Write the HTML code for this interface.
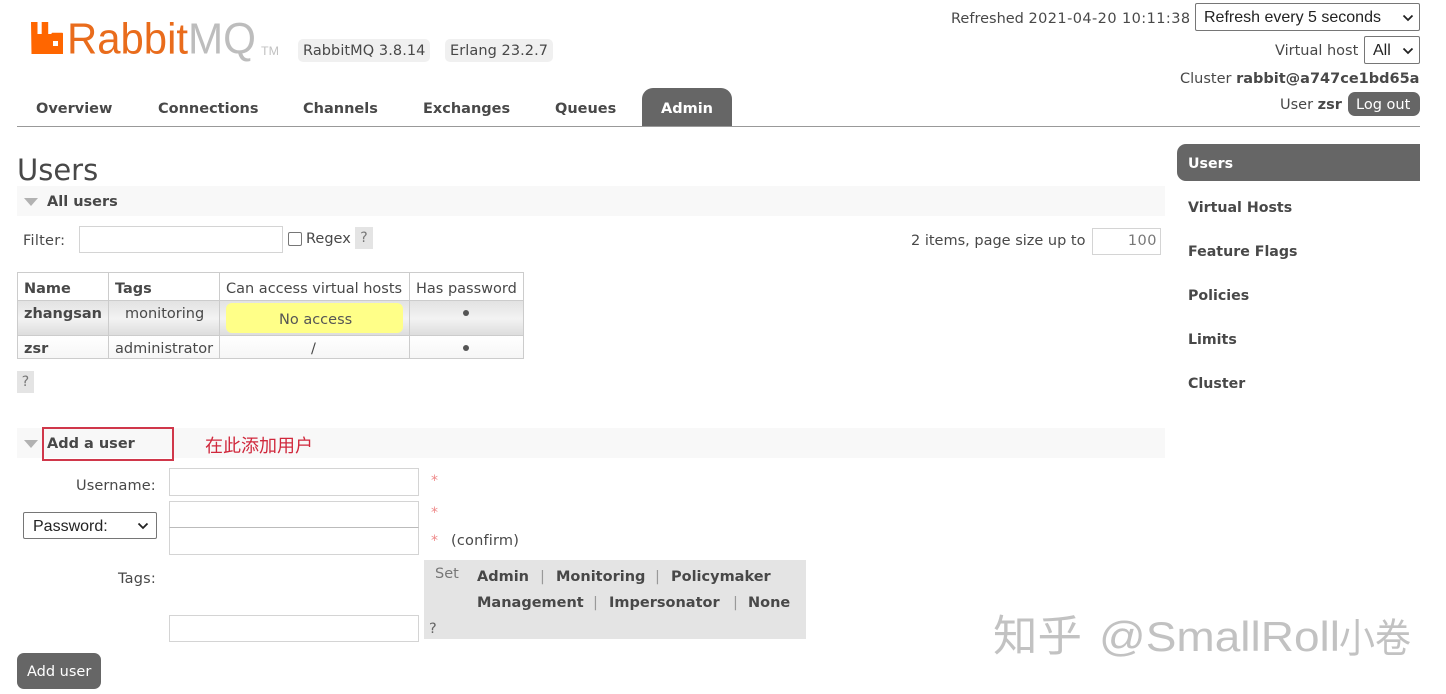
<!DOCTYPE html>
<html><head><meta charset="utf-8"><title>RabbitMQ Management</title>
<style>
html,body{margin:0;padding:0;background:#fff}
body{position:relative;width:1446px;height:694px;overflow:hidden;font-family:"DejaVu Sans",Verdana,sans-serif;font-size:14.5px;color:#484848}
.t{position:absolute;white-space:nowrap;line-height:18px}
.b{font-weight:bold}
.box{position:absolute;box-sizing:border-box}
.inp{position:absolute;box-sizing:border-box;background:#fff;border:1px solid #d4d4d4}
.sel{position:absolute;box-sizing:border-box;background:#fff;border:1px solid #767676;border-radius:2px;font-family:"Liberation Sans",sans-serif;font-size:16px;color:#222;line-height:28px;padding-left:8px}
.sel svg{position:absolute;top:10px}
.tri{position:absolute;width:0;height:0;border-left:7px solid transparent;border-right:7px solid transparent;border-top:8px solid #b2b2b2}
.q{position:absolute;background:#e4e4e4;color:#777;text-align:center;line-height:22px;font-size:14px}
.red{color:#e88;position:absolute;font-size:14px;line-height:14px}
.nav{position:absolute;font-weight:bold;white-space:nowrap;line-height:18px;color:#484848}
.side{position:absolute;left:1188px;font-weight:bold;font-size:14.2px;line-height:18px;white-space:nowrap;color:#484848}
.dot{position:absolute;width:6px;height:6px;border-radius:50%;background:#555}
</style></head><body>

<svg class="box" style="left:0;top:0" width="300" height="70" viewBox="0 0 300 70">
<path fill="#f60" fill-rule="evenodd" d="M31 22h6.500v12h4.200v-12h6.500v12h3.300v-.5q0-.8.8-.8h9.900q.8 0 .8.8v20.500h-31.500zM53 41h5v5h-5z"/>
<text x="67" y="53.500" font-family="Liberation Sans" font-size="44" fill="#e96c1c" textLength="121" lengthAdjust="spacingAndGlyphs">Rabbit</text>
<text x="188" y="53.500" font-family="Liberation Sans" font-size="44" fill="#bdbdbd" textLength="68" lengthAdjust="spacingAndGlyphs">MQ</text>
<text x="261" y="55" font-family="Liberation Sans" font-size="12" fill="#c2c2c2" textLength="18" lengthAdjust="spacingAndGlyphs">TM</text>
</svg>

<div class="box" style="left:298px;top:39px;width:132px;height:23px;background:#f0f0f0;border-radius:5px"></div>
<div class="t" style="left:303px;top:42px;letter-spacing:.07px">RabbitMQ 3.8.14</div>
<div class="box" style="left:445px;top:39px;width:108px;height:23px;background:#f0f0f0;border-radius:5px"></div>
<div class="t" style="left:450px;top:42px;letter-spacing:.07px">Erlang 23.2.7</div>

<div class="nav" style="left:36px;top:100px">Overview</div>
<div class="nav" style="left:158px;top:100px">Connections</div>
<div class="nav" style="left:303px;top:100px">Channels</div>
<div class="nav" style="left:423px;top:100px">Exchanges</div>
<div class="nav" style="left:555px;top:100px">Queues</div>
<div class="box" style="left:642px;top:88px;width:90px;height:38px;background:#666;border-radius:11px 11px 0 0"></div>
<div class="nav" style="left:661px;top:100px;color:#fff">Admin</div>
<div class="box" style="left:17px;top:126px;width:1403px;height:1px;background:#999"></div>

<div class="t" style="left:951px;top:10px">Refreshed <span style="letter-spacing:.42px">2021-04-20 10:11:38</span></div>
<div class="sel" style="left:1195px;top:3px;width:225px;height:28px">Refresh every 5 seconds<svg style="left:206px;top:10px" width="12" height="8" viewBox="0 0 12 8"><path d="M1.500 1.500l4.500 4.500 4.500-4.500" fill="none" stroke="#222" stroke-width="1.800"/></svg></div>
<div class="t" style="left:1275px;top:42px">Virtual host</div>
<div class="sel" style="left:1364px;top:36px;width:56px;height:28px">All<svg style="left:37px;top:10px" width="12" height="8" viewBox="0 0 12 8"><path d="M1.500 1.500l4.500 4.500 4.500-4.500" fill="none" stroke="#222" stroke-width="1.800"/></svg></div>
<div class="t" style="left:1180px;top:70px">Cluster <b>rabbit@a747ce1bd65a</b></div>
<div class="t" style="left:1280px;top:96px">User <b>zsr</b></div>
<div class="box" style="left:1348px;top:92px;width:72px;height:24px;background:#666;border-radius:7px"></div>
<div class="t" style="left:1356px;top:96px;color:#fff">Log out</div>

<div class="t" style="left:17px;top:153px;font-size:29px;line-height:34px;color:#484848">Users</div>

<div class="box" style="left:17px;top:186px;width:1148px;height:30px;background:#f8f8f8"></div>
<div class="tri" style="left:24px;top:198px"></div>
<div class="t b" style="left:47px;top:193px">All users</div>

<div class="t" style="left:23px;top:232px;letter-spacing:.25px">Filter:</div>
<div class="inp" style="left:79px;top:226px;width:204px;height:27px"></div>
<div class="box" style="left:288px;top:232px;width:14px;height:14px;border:1px solid #767676;border-radius:2px;background:#fff"></div>
<div class="t" style="left:306px;top:230px">Regex</div>
<div class="q" style="left:355px;top:227px;width:18px;height:22px">?</div>

<div class="t" style="left:911px;top:232px">2 items, page size up to</div>
<div class="inp" style="left:1092px;top:228px;width:69px;height:27px"></div>
<div class="t" style="right:289px;top:232px;color:#777;letter-spacing:.5px">100</div>

<div class="box" style="left:17px;top:272px;width:507px;height:87px;border:1px solid #ccc;background:#fff"></div>
<div class="box" style="left:18px;top:301px;width:505px;height:35px;background:linear-gradient(#e2e2e2,#f3f3f3 50%,#dcdcdc)"></div>
<div class="box" style="left:18px;top:336px;width:505px;height:22px;background:linear-gradient(#fff,#f6f6f6)"></div>
<div class="box" style="left:17px;top:300px;width:507px;height:1px;background:#ccc"></div>
<div class="box" style="left:17px;top:335px;width:507px;height:1px;background:#ccc"></div>
<div class="box" style="left:108px;top:272px;width:1px;height:87px;background:#ccc"></div>
<div class="box" style="left:219px;top:272px;width:1px;height:87px;background:#ccc"></div>
<div class="box" style="left:409px;top:272px;width:1px;height:87px;background:#ccc"></div>

<div class="t b" style="left:24px;top:280px">Name</div>
<div class="t b" style="left:115px;top:280px">Tags</div>
<div class="t" style="left:226px;top:280px">Can access virtual hosts</div>
<div class="t" style="left:416px;top:280px">Has password</div>
<div class="t b" style="left:24px;top:305px">zhangsan</div>
<div class="t" style="left:125px;top:305px">monitoring</div>
<div class="box" style="left:226px;top:303px;width:177px;height:30px;background:#ffff88;border-radius:6px"></div>
<div class="t" style="left:279px;top:311px;color:#555">No access</div>
<div class="dot" style="left:463px;top:310px"></div>
<div class="t b" style="left:24px;top:340px">zsr</div>
<div class="t" style="left:115px;top:340px">administrator</div>
<div class="t" style="left:311px;top:340px">/</div>
<div class="dot" style="left:463px;top:345px"></div>
<div class="q" style="left:17px;top:371px;width:17px;height:22px">?</div>

<div class="box" style="left:17px;top:428px;width:1148px;height:30px;background:#f8f8f8"></div>
<div class="tri" style="left:24px;top:440px"></div>
<div class="box" style="left:42px;top:427px;width:132px;height:34px;border:2px solid #d0374a"></div>
<div class="t b" style="left:47px;top:435px">Add a user</div>
<div class="t" style="left:205px;top:435px;font-family:'Liberation Sans','Noto Sans CJK SC',sans-serif;font-size:18px;line-height:22px;color:#d0283c">在此添加用户</div>

<div class="t" style="left:76px;top:477px;letter-spacing:.1px">Username:</div>
<div class="inp" style="left:169px;top:468px;width:250px;height:28px"></div>
<div class="red" style="left:431px;top:474px">*</div>
<div class="sel" style="left:23px;top:512px;width:134px;height:27px;padding-left:9px">Password:<svg style="left:113px;top:9px" width="12" height="8" viewBox="0 0 12 8"><path d="M1.500 1.500l4.500 4.500 4.500-4.500" fill="none" stroke="#222" stroke-width="1.800"/></svg></div>
<div class="inp" style="left:169px;top:501px;width:250px;height:28px"></div>
<div class="red" style="left:431px;top:506px">*</div>
<div class="inp" style="left:169px;top:527px;width:250px;height:28px;border-top-color:#bbb"></div>
<div class="red" style="left:431px;top:534px">*</div>
<div class="t" style="left:451px;top:532px;letter-spacing:.2px">(confirm)</div>

<div class="t" style="left:118px;top:570px;letter-spacing:.2px">Tags:</div>
<div class="box" style="left:424px;top:560px;width:382px;height:79px;background:#e4e4e4"></div>
<div class="t" style="left:435px;top:565px;color:#777">Set</div>
<div class="t b" style="left:477px;top:568px">Admin</div>
<div class="t" style="left:540px;top:568px;color:#999">|</div>
<div class="t b" style="left:556px;top:568px">Monitoring</div>
<div class="t" style="left:655px;top:568px;color:#999">|</div>
<div class="t b" style="left:671px;top:568px">Policymaker</div>
<div class="t b" style="left:477px;top:594px">Management</div>
<div class="t" style="left:593px;top:594px;color:#999">|</div>
<div class="t b" style="left:609px;top:594px">Impersonator</div>
<div class="t" style="left:733px;top:594px;color:#999">|</div>
<div class="t b" style="left:748px;top:594px">None</div>
<div class="t" style="left:429px;top:620px;color:#666">?</div>
<div class="inp" style="left:169px;top:615px;width:250px;height:27px"></div>

<div class="box" style="left:17px;top:653px;width:84px;height:36px;background:#666;border-radius:7px"></div>
<div class="t" style="left:27px;top:663px;color:#fff">Add user</div>

<div class="box" style="left:1177px;top:144px;width:243px;height:37px;background:#666;border-radius:9px 0 0 9px"></div>
<div class="side" style="top:155px;color:#fff">Users</div>
<div class="side" style="top:199px">Virtual Hosts</div>
<div class="side" style="top:243px">Feature Flags</div>
<div class="side" style="top:287px">Policies</div>
<div class="side" style="top:331px">Limits</div>
<div class="side" style="top:375px">Cluster</div>

<svg class="box" style="left:980px;top:600px" width="440" height="70" viewBox="0 0 440 70" font-family="'Liberation Sans','Noto Sans CJK SC',sans-serif" fill="#c2c2c2">
<text x="13" y="51" font-size="43" textLength="89" lengthAdjust="spacingAndGlyphs">知乎</text>
<text x="119" y="51" font-size="42" textLength="241" lengthAdjust="spacingAndGlyphs">@SmallRoll</text>
<text x="359" y="52" font-size="40" textLength="72" lengthAdjust="spacingAndGlyphs">小卷</text>
</svg>
</body></html>
